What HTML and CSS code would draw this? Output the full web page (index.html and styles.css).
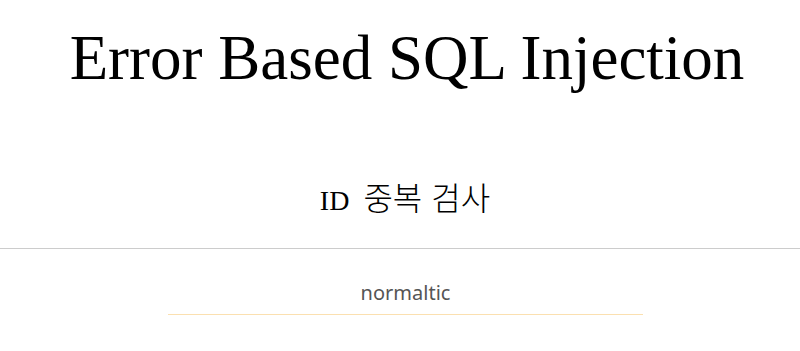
FILE: index.html
```html
<!DOCTYPE html>
<html lang="ko">
<head>
    <meta charset="UTF-8">
    <title>Error Based SQL Injection</title>
    <link rel="stylesheet" href="styles.css">
</head>
<body>
    <h1 class="title">Error Based SQL Injection</h1>
    <h2 class="subtitle">ID <span class="ko">중복 검사</span></h2>
    <hr class="divider">
    <form class="check-form" action="">
        <input class="id-input" type="text" value="normaltic">
    </form>
</body>
</html>
```

FILE: styles.css
```css
body {
    margin: 0;
    font-family: "Liberation Serif", "Noto Sans CJK KR", serif;
    background: #fff;
    color: #000;
}
.title {
    margin: 0;
    padding: 18px 0 0 14px;
    text-align: center;
    font-size: 63px;
    font-weight: 400;
    line-height: 80px;
}
.subtitle {
    margin: 0;
    padding: 83px 0 0 10px;
    text-align: center;
    font-size: 28px;
    font-weight: 400;
    line-height: 40px;
}
.ko {
    margin-left: 7px;
    font-size: 32px;
    font-weight: 300;
    line-height: 28px;
    word-spacing: 1px;
}
.divider {
    margin: 27px 0 0;
    border: none;
    border-top: 1px solid #ccc;
    height: 0;
}
.check-form {
    display: flex;
    justify-content: center;
    padding: 24px 0 0 11px;
}
.id-input {
    width: 475px;
    border: none;
    border-bottom: 1px solid #fbe0b0;
    outline: none;
    background: transparent;
    text-align: center;
    font-family: "Noto Sans", sans-serif;
    font-size: 20px;
    color: #555;
    padding: 6px 0 8px;
}
```
